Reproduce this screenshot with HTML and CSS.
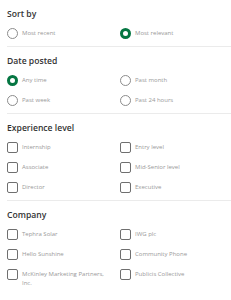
FILE: index.html
```html
<!DOCTYPE html>
<html>
<head>
<meta charset="utf-8">
<link rel="stylesheet" href="styles.css">
</head>
<body>
<div class="filters">
  <section class="group">
    <h2 class="title">Sort by</h2>
    <div class="options">
      <label class="opt"><span class="radio"></span><span class="text">Most recent</span></label>
      <label class="opt"><span class="radio on"></span><span class="text">Most relevant</span></label>
    </div>
  </section>
  <section class="group">
    <h2 class="title">Date posted</h2>
    <div class="options">
      <label class="opt"><span class="radio on"></span><span class="text">Any time</span></label>
      <label class="opt"><span class="radio"></span><span class="text">Past month</span></label>
      <label class="opt"><span class="radio"></span><span class="text">Past week</span></label>
      <label class="opt"><span class="radio"></span><span class="text">Past 24 hours</span></label>
    </div>
  </section>
  <section class="group">
    <h2 class="title">Experience level</h2>
    <div class="options">
      <label class="opt"><span class="check"></span><span class="text">Internship</span></label>
      <label class="opt"><span class="check"></span><span class="text">Entry level</span></label>
      <label class="opt"><span class="check"></span><span class="text">Associate</span></label>
      <label class="opt"><span class="check"></span><span class="text">Mid-Senior level</span></label>
      <label class="opt"><span class="check"></span><span class="text">Director</span></label>
      <label class="opt"><span class="check"></span><span class="text">Executive</span></label>
    </div>
  </section>
  <section class="group last">
    <h2 class="title">Company</h2>
    <div class="options">
      <label class="opt"><span class="check"></span><span class="text">Tephra Solar</span></label>
      <label class="opt"><span class="check"></span><span class="text">IWG plc</span></label>
      <label class="opt"><span class="check"></span><span class="text">Hello Sunshine</span></label>
      <label class="opt"><span class="check"></span><span class="text">Community Phone</span></label>
      <label class="opt"><span class="check"></span><span class="text">McKinley Marketing Partners, Inc.</span></label>
      <label class="opt"><span class="check"></span><span class="text">Publicis Collective</span></label>
    </div>
  </section>
</div>
</body>
</html>
```
FILE: styles.css
```css
html, body {
  margin: 0;
  padding: 0;
  background: #ffffff;
}
body {
  font-family: "Open Sans", "Noto Sans", sans-serif;
  width: 231px;
  height: 300px;
  overflow: hidden;
}
.filters {
  padding-left: 7px;
}
.group {
  padding: 8px 0 7px 0;
  border-bottom: 1px solid #ebebeb;
}
.group.last {
  border-bottom: none;
}
.title {
  margin: 0 0 8px 0;
  font-size: 8.6px;
  line-height: 12px;
  font-weight: 600;
  color: #333333;
}
.options {
  display: grid;
  grid-template-columns: 113px 1fr;
  row-gap: 9px;
}
.opt {
  display: flex;
  align-items: flex-start;
  gap: 4px;
}
.radio {
  flex: none;
  box-sizing: border-box;
  width: 11px;
  height: 11px;
  border: 1px solid #8c8c8c;
  border-radius: 50%;
}
.radio.on {
  border: 3px solid #057642;
}
.check {
  flex: none;
  box-sizing: border-box;
  width: 11px;
  height: 11px;
  border: 1px solid #6f6f6f;
  border-radius: 2px;
}
.text {
  font-size: 6px;
  line-height: 9px;
  margin-top: 1px;
  color: #999999;
  max-width: 90px;
}
```
